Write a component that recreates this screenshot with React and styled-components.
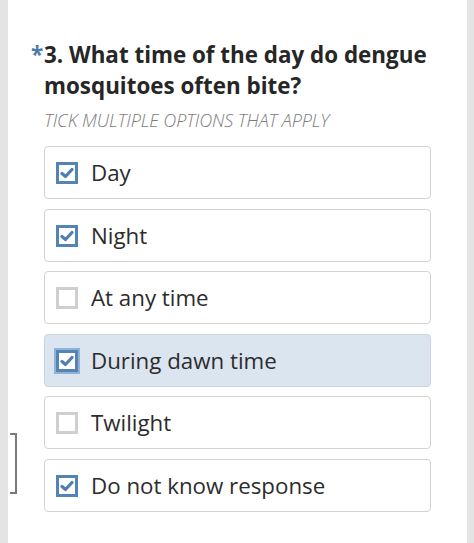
import React from 'react';
import styled, { createGlobalStyle } from 'styled-components';

const GlobalStyle = createGlobalStyle`
  html, body {
    margin: 0;
    padding: 0;
    background: #e4e4e4;
  }
  body {
    font-family: 'Open Sans', 'Liberation Sans', sans-serif;
  }
`;

const Page = styled.div`
  width: 474px;
  height: 543px;
  padding: 0 7px 0 8px;
  box-sizing: border-box;
  background: #e4e4e4;
`;

const Panel = styled.div`
  position: relative;
  height: 100%;
  background: #fff;
  padding: 39px 36px 0 36px;
  box-sizing: border-box;
`;

const Question = styled.h2`
  position: relative;
  margin: 0;
  font-size: 22.4px;
  font-weight: 700;
  line-height: 31px;
  color: #262626;
`;

const Star = styled.span`
  position: absolute;
  left: -13px;
  top: 0;
  color: #4b7bab;
  font-weight: 700;
`;

const Hint = styled.p`
  margin: 7px 0 14px 0;
  font-size: 18px;
  font-weight: 300;
  font-style: italic;
  color: #7c7c7c;
  line-height: 24px;
  letter-spacing: -0.1px;
`;

const Options = styled.div`
  display: flex;
  flex-direction: column;
  gap: 9.5px;
  width: 387px;
`;

const Option = styled.label`
  display: flex;
  align-items: center;
  gap: 13px;
  height: 53px;
  padding: 0 11px;
  box-sizing: border-box;
  border: 1px solid ${p => (p.$active ? '#c9d5e2' : '#d2d2d2')};
  border-radius: 4px;
  background: ${p => (p.$active ? '#dbe5f0' : '#fff')};
  font-size: 22.3px;
  color: #2c2c2c;
`;

const Box = styled.span`
  flex: none;
  width: 22px;
  height: 22px;
  box-sizing: border-box;
  border: 3px solid ${p => (p.$checked ? '#5384b4' : '#cfcfcf')};
  background: #fff;
  display: flex;
  align-items: center;
  justify-content: center;
  margin-top: 1px;
  box-shadow: ${p => (p.$focus ? '0 0 0 2px #8fb2d6' : 'none')};
`;

const Bracket = styled.span`
  position: absolute;
  left: 2px;
  top: 433px;
  width: 5px;
  height: 57px;
  border: 2px solid #7a7a7a;
  border-left: none;
`;

const Check = () => (
  <svg width="14" height="12" viewBox="0 0 14 12">
    <path d="M2 6.5 L5.5 9.5 L12 2.5" fill="none" stroke="#4f7fb0" strokeWidth="3.2" strokeLinejoin="round" strokeLinecap="round" />
  </svg>
);

const items = [
  { label: 'Day', checked: true },
  { label: 'Night', checked: true },
  { label: 'At any time', checked: false },
  { label: 'During dawn time', checked: true, active: true },
  { label: 'Twilight', checked: false },
  { label: 'Do not know response', checked: true },
];

export default function App() {
  return (
    <>
      <GlobalStyle />
      <Page>
        <Panel>
          <Question>
            <Star>*</Star>3. What time of the day do dengue mosquitoes often bite?
          </Question>
          <Hint>TICK MULTIPLE OPTIONS THAT APPLY</Hint>
          <Options>
            {items.map(item => (
              <Option key={item.label} $active={item.active}>
                <Box $checked={item.checked} $focus={item.active}>
                  {item.checked && <Check />}
                </Box>
                {item.label}
              </Option>
            ))}
          </Options>
          <Bracket />
        </Panel>
      </Page>
    </>
  );
}
